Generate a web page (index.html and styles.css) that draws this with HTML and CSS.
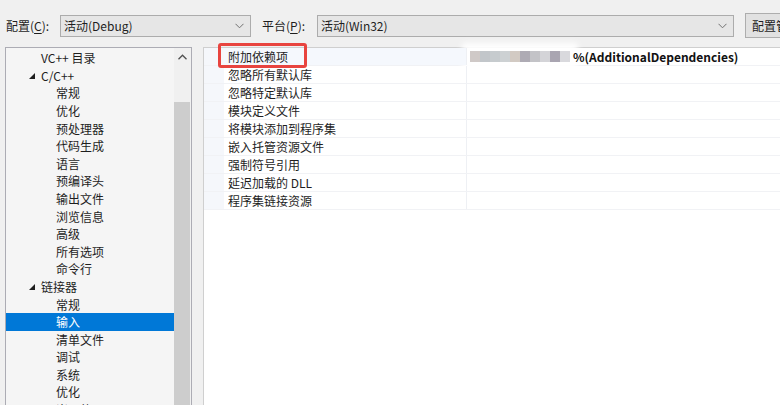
FILE: index.html
```html
<!DOCTYPE html>
<html>
<head>
<meta charset="utf-8">
<link rel="stylesheet" href="styles.css">
</head>
<body>
<div class="toolbar">
  <span class="lbl lbl-cfg">配置(<u>C</u>):</span>
  <div class="combo combo-cfg"><span>活动(Debug)</span><svg class="chev" width="9" height="6" viewBox="0 0 9 6"><path d="M0.5 0.8 L4.5 4.8 L8.5 0.8" fill="none" stroke="#707070" stroke-width="1"/></svg></div>
  <span class="lbl lbl-plat">平台(<u>P</u>):</span>
  <div class="combo combo-plat"><span>活动(Win32)</span><svg class="chev" width="9" height="6" viewBox="0 0 9 6"><path d="M0.5 0.8 L4.5 4.8 L8.5 0.8" fill="none" stroke="#707070" stroke-width="1"/></svg></div>
  <div class="btn">配置管理器(O)...</div>
</div>
<div class="main">
  <div class="tree">
    <div class="tree-list">
      <div class="node l0">VC++ 目录</div>
      <div class="node l0 exp"><svg class="tri" width="6" height="6" viewBox="0 0 6 6"><path d="M6 0 L6 6 L0 6 Z" fill="#1e1e1e"/></svg>C/C++</div>
      <div class="node l1">常规</div>
      <div class="node l1">优化</div>
      <div class="node l1">预处理器</div>
      <div class="node l1">代码生成</div>
      <div class="node l1">语言</div>
      <div class="node l1">预编译头</div>
      <div class="node l1">输出文件</div>
      <div class="node l1">浏览信息</div>
      <div class="node l1">高级</div>
      <div class="node l1">所有选项</div>
      <div class="node l1">命令行</div>
      <div class="node l0 exp"><svg class="tri" width="6" height="6" viewBox="0 0 6 6"><path d="M6 0 L6 6 L0 6 Z" fill="#1e1e1e"/></svg>链接器</div>
      <div class="node l1">常规</div>
      <div class="node l1 sel">输入</div>
      <div class="node l1">清单文件</div>
      <div class="node l1">调试</div>
      <div class="node l1">系统</div>
      <div class="node l1">优化</div>
      <div class="node l1">嵌入的 IDL</div>
    </div>
    <div class="vscroll">
      <div class="arrow"><svg width="9" height="6" viewBox="0 0 9 6"><path d="M0.5 5.2 L4.5 1.2 L8.5 5.2" fill="none" stroke="#505050" stroke-width="1.3"/></svg></div>
      <div class="track"></div>
      <div class="thumb"></div>
    </div>
  </div>
  <div class="grid">
    <div class="rows">
      <div class="row first">
        <div class="gut"></div>
        <div class="name">附加依赖项<span class="hl"></span></div>
        <div class="val">
          <span class="mosaic">
            <i style="background:#cfc9c7"></i><i style="background:#c2c6ca"></i><i style="background:#c6cbce"></i><i style="background:#cdd1d3"></i><i style="background:#d2cac3"></i><i style="background:#aeabb4"></i><i style="background:#c3c3c7"></i><i style="background:#d4d4d8"></i><i style="background:#a9a5b1"></i><i style="background:#d9d9dd"></i>
          </span><b>%(AdditionalDependencies)</b>
        </div>
      </div>
      <div class="row"><div class="gut"></div><div class="name">忽略所有默认库</div><div class="val"></div></div>
      <div class="row"><div class="gut"></div><div class="name">忽略特定默认库</div><div class="val"></div></div>
      <div class="row"><div class="gut"></div><div class="name">模块定义文件</div><div class="val"></div></div>
      <div class="row"><div class="gut"></div><div class="name">将模块添加到程序集</div><div class="val"></div></div>
      <div class="row"><div class="gut"></div><div class="name">嵌入托管资源文件</div><div class="val"></div></div>
      <div class="row"><div class="gut"></div><div class="name">强制符号引用</div><div class="val"></div></div>
      <div class="row"><div class="gut"></div><div class="name">延迟加载的 DLL</div><div class="val"></div></div>
      <div class="row"><div class="gut"></div><div class="name">程序集链接资源</div><div class="val"></div></div>
    </div>
  </div>
</div>
</body>
</html>
```

FILE: styles.css
```css
* { box-sizing: border-box; }
html, body { margin: 0; padding: 0; }
body {
  width: 780px;
  height: 405px;
  overflow: hidden;
  background: #f0f0f0;
  font-family: "Noto Sans CJK SC", "Noto Sans", sans-serif;
  font-size: 12px;
  color: #1e1e1e;
}
.toolbar {
  display: flex;
  align-items: center;
  height: 25px;
  margin-top: 13px;
  white-space: nowrap;
  overflow: hidden;
}
.toolbar > * { flex-shrink: 0; }
.lbl { line-height: 22px; }
.lbl u { text-decoration: underline; text-underline-offset: 2px; }
.lbl-cfg { margin-left: 6px; width: 54px; }
.lbl-plat { margin-left: 11px; width: 55px; }
.combo {
  height: 22px;
  background: #e6e6e6;
  border: 1px solid #acacac;
  display: flex;
  align-items: center;
  justify-content: space-between;
  padding: 0 6px 0 3px;
  line-height: 20px;
}
.combo-cfg { width: 191px; }
.combo-plat { width: 417px; }
.chev { display: block; margin-top: 1px; }
.btn {
  margin-left: 11px;
  height: 25px;
  min-width: 100px;
  background: #e1e1e1;
  border: 1px solid #adadad;
  padding: 0 6px;
  line-height: 23px;
}
.main {
  display: flex;
  margin-top: 9px;
  height: 400px;
}
.tree {
  margin-left: 5px;
  width: 187px;
  height: 100%;
  border: 1px solid #acacb4;
  background: #f5f5f5;
  display: flex;
  flex-shrink: 0;
}
.tree-list {
  width: 168px;
  padding-top: 1.2px;
}
.node {
  height: 17.6px;
  line-height: 17.6px;
  white-space: nowrap;
  display: flex;
  align-items: center;
}
.l0 { padding-left: 35px; }
.l1 { padding-left: 50px; }
.exp { padding-left: 23px; }
.tri { margin-right: 6px; margin-top: 1px; }
.sel { background: #0078d7; color: #fff; }
.vscroll {
  width: 17px;
  display: flex;
  flex-direction: column;
  background: #f0f0f0;
}
.arrow {
  height: 17px;
  display: flex;
  align-items: center;
  justify-content: center;
}
.track { height: 37px; }
.thumb {
  flex: 1;
  background: #cdcdcd;
  margin: 0 1px 0 0;
}
.grid {
  margin-left: 11px;
  flex: 1;
  height: 100%;
  background: #fff;
  border-top: 1px solid #cfcfcf;
  border-left: 1px solid #cfcfcf;
}
.rows { display: flex; flex-direction: column; }
.row {
  display: flex;
  height: 18px;
  border-bottom: 1px solid #f1f2f5;
}
.gut { width: 20px; background: #f5f7fb; }
.name {
  position: relative;
  width: 243px;
  padding-left: 4px;
  line-height: 17px;
  border-right: 1px solid #eef0f4;
  white-space: nowrap;
}
.first .name { background: #f5f8fd; }
.hl {
  position: absolute;
  left: -6px;
  top: -5px;
  width: 89px;
  height: 25px;
  border: 3px solid #e8443f;
  border-radius: 3px;
}
.val {
  flex: 1;
  display: flex;
  align-items: center;
  white-space: nowrap;
  padding-left: 3px;
}
.mosaic {
  display: flex;
  flex-direction: row;
  height: 11px;
  margin-right: 3px;
  background: #fff;
  box-shadow: 0 0 6px 8px rgba(255,255,255,0.95);
}
.mosaic i { display: block; width: 10px; height: 11px; }
.val b { font-weight: 700; color: #111; }
```
